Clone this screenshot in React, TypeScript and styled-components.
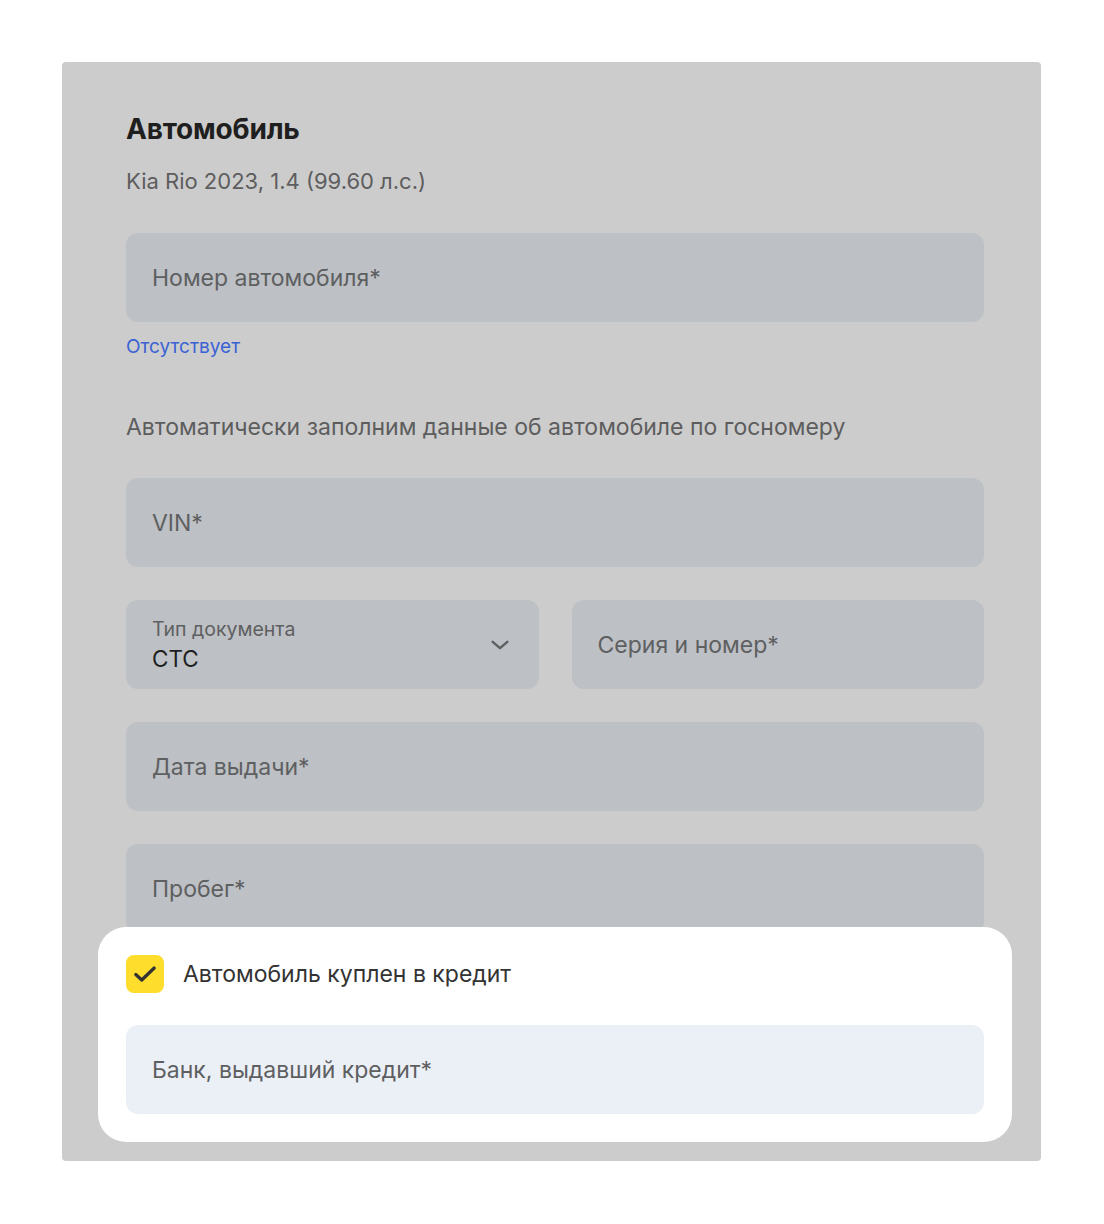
import styled, { createGlobalStyle } from 'styled-components';

const GlobalStyle = createGlobalStyle`
  body {
    margin: 0;
    background: #ffffff;
    font-family: Inter, Roboto, "Liberation Sans", Arial, sans-serif;
    -webkit-font-smoothing: antialiased;
  }
`;

const Page = styled.div`
  padding: 62px 63px 63px 62px;
`;

const Panel = styled.section`
  width: 979px;
  box-sizing: border-box;
  padding: 49px 57px 19px 64px;
  background: #cccccc;
  border-radius: 4px;
`;

const Title = styled.h2`
  margin: 0;
  font-size: 28px;
  line-height: 36px;
  font-weight: 700;
  letter-spacing: -0.2px;
  color: #1f1f1f;
`;

const Subtitle = styled.p`
  margin: 19px 0 0;
  font-size: 22px;
  line-height: 30px;
  color: #5d5d5e;
`;

const Field = styled.div<{ $light?: boolean }>`
  display: flex;
  align-items: center;
  box-sizing: border-box;
  height: 89px;
  padding: 0 26px;
  border-radius: 12px;
  background: ${({ $light }) => ($light ? '#ebeff6' : '#bdc0c4')};
  font-size: 23px;
  color: #5e5f61;
`;

const Link = styled.a`
  display: block;
  margin-top: 12px;
  font-size: 19px;
  line-height: 26px;
  color: #3a62d4;
  text-decoration: none;
`;

const Hint = styled.p`
  margin: 52px 0 36px;
  font-size: 23px;
  line-height: 30px;
  color: #5d5d5e;
`;

const Stack = styled.div`
  display: flex;
  flex-direction: column;
  gap: 33px;
`;

const Row = styled.div`
  display: grid;
  grid-template-columns: 1fr 1fr;
  gap: 33px;
`;

const Select = styled(Field)`
  justify-content: space-between;
  padding-right: 28px;
`;

const SelectText = styled.div`
  display: flex;
  flex-direction: column;
`;

const SelectLabel = styled.span`
  font-size: 19.5px;
  line-height: 22px;
  color: #5e5f61;
`;

const SelectValue = styled.span`
  margin-top: 6px;
  font-size: 22.5px;
  line-height: 26px;
  color: #1f1f1f;
`;

const Highlight = styled.div`
  position: relative;
  margin: -6px -28px 0;
  padding: 28px;
  background: #ffffff;
  border-radius: 28px;
`;

const CheckRow = styled.label`
  display: flex;
  align-items: center;
  gap: 19px;
  margin-bottom: 32px;
  font-size: 23px;
  color: #333333;
`;

const CheckBox = styled.span`
  display: flex;
  align-items: center;
  justify-content: center;
  width: 38px;
  height: 38px;
  border-radius: 8px;
  background: #ffdd2d;
`;

const Chevron = () => (
  <svg width="22" height="22" viewBox="0 0 24 24" fill="none">
    <path d="M4 8.5l8 7 8-7" stroke="#5e5f61" strokeWidth="2.6" strokeLinecap="round" strokeLinejoin="round" />
  </svg>
);

const Check = () => (
  <svg width="26" height="26" viewBox="0 0 24 24" fill="none">
    <path d="M3.5 12.5L9 17.5L20.5 6.5" stroke="#333333" strokeWidth="3" strokeLinecap="round" strokeLinejoin="round" />
  </svg>
);

export default function App() {
  return (
    <>
      <GlobalStyle />
      <Page>
        <Panel>
          <Title>Автомобиль</Title>
          <Subtitle>Kia Rio 2023, 1.4 (99.60 л.с.)</Subtitle>
          <Field style={{ marginTop: 37 }}>Номер автомобиля*</Field>
          <Link>Отсутствует</Link>
          <Hint>Автоматически заполним данные об автомобиле по госномеру</Hint>
          <Stack>
            <Field>VIN*</Field>
            <Row>
              <Select>
                <SelectText>
                  <SelectLabel>Тип документа</SelectLabel>
                  <SelectValue>СТС</SelectValue>
                </SelectText>
                <Chevron />
              </Select>
              <Field>Серия и номер*</Field>
            </Row>
            <Field>Дата выдачи*</Field>
            <Field>Пробег*</Field>
          </Stack>
          <Highlight>
            <CheckRow>
              <CheckBox>
                <Check />
              </CheckBox>
              Автомобиль куплен в кредит
            </CheckRow>
            <Field $light>Банк, выдавший кредит*</Field>
          </Highlight>
        </Panel>
      </Page>
    </>
  );
}
